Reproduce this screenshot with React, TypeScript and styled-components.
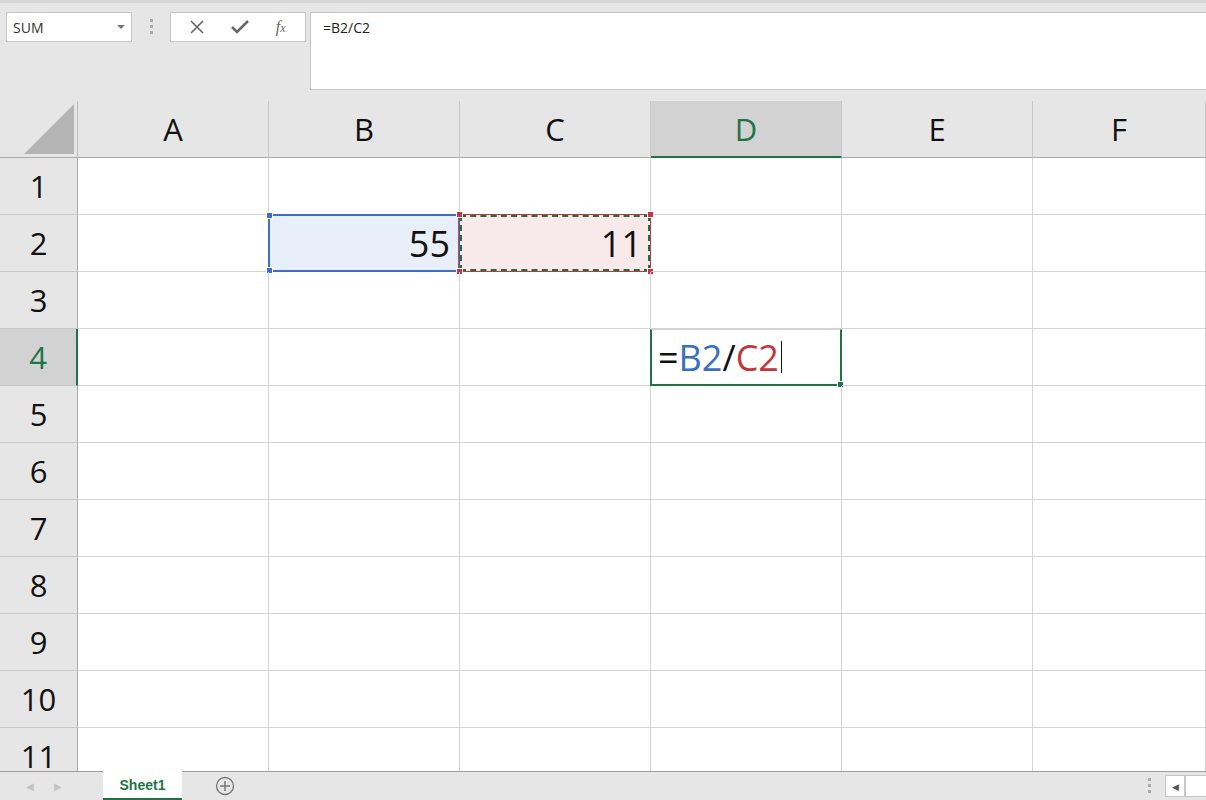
import React from "react";
import styled, { createGlobalStyle, css } from "styled-components";

const G = createGlobalStyle`
  html,body{margin:0;padding:0;background:#fff;}
  body{font-family:"Open Sans","Liberation Sans",sans-serif;}
`;
const Page = styled.div`width:1206px;height:800px;overflow:hidden;display:flex;flex-direction:column;background:#fff;`;
const Top = styled.div`height:101px;background:#e6e6e6;border-top:3px solid #d6d6d6;box-sizing:border-box;display:flex;align-items:flex-start;padding-top:9px;`;
const NameBox = styled.div`margin-left:6px;width:126px;height:30px;box-sizing:border-box;background:#fff;border:1px solid #c6c6c6;display:flex;align-items:center;justify-content:space-between;padding:0 6px;font-size:14px;color:#333;`;
const Dots = styled.div`width:38px;display:flex;justify-content:center;align-items:center;height:30px;`;
const Tools = styled.div`width:136px;height:30px;box-sizing:border-box;background:#fff;border:1px solid #c6c6c6;display:flex;align-items:center;justify-content:space-around;padding:0 6px;color:#666;`;
const Formula = styled.div`margin-left:4px;flex:1;height:78px;box-sizing:border-box;background:#fff;border:1px solid #c6c6c6;border-right:none;padding:5px 12px;font-size:14px;color:#222;`;
const Grid = styled.div`flex:1;display:grid;grid-template-columns:78px repeat(5,191px) 1fr;grid-auto-rows:57px;overflow:hidden;`;
const Corner = styled.div`background:#e6e6e6;border-right:1px solid #bdbdbd;border-bottom:1px solid #ababab;display:flex;align-items:flex-end;justify-content:flex-end;padding:0 3px 3px 0;`;
const ColH = styled.div<{ $sel?: boolean }>`background:${p => p.$sel ? "#d2d2d2" : "#e6e6e6"};border-right:1px solid #c8c8c8;border-bottom:${p => p.$sel ? "2px solid #217346" : "1px solid #ababab"};display:flex;align-items:center;justify-content:center;font-size:31px;color:${p => p.$sel ? "#217346" : "#111"};box-sizing:border-box;`;
const RowH = styled.div<{ $sel?: boolean }>`background:${p => p.$sel ? "#d2d2d2" : "#e6e6e6"};border-bottom:1px solid #c8c8c8;border-right:${p => p.$sel ? "2px solid #217346" : "1px solid #ababab"};display:flex;align-items:center;justify-content:center;font-size:31px;color:${p => p.$sel ? "#217346" : "#111"};box-sizing:border-box;`;
const Cell = styled.div<{ $kind?: "blue" | "red" | "active" }>`position:relative;border-right:1px solid #d4d4d4;border-bottom:1px solid #d4d4d4;box-sizing:border-box;display:flex;align-items:center;justify-content:flex-end;padding-right:8px;font-size:36px;color:#111;font-family:"Open Sans","Liberation Sans",sans-serif;
 ${p => p.$kind === "blue" && css`background:#e8eff9;border:2px solid #3a6fc4;margin:-1px 0 0 -1px;`}
 ${p => p.$kind === "red" && css`background:#f8eaea;border:1px solid #c4353e;margin:-1px 0 0 -1px;outline:2px dashed #1f6f3d;outline-offset:-3px;`}
 ${p => p.$kind === "active" && css`border:2px solid #217346;border-top:1px solid #d4d4d4;margin:0 0 0 -1px;justify-content:flex-start;padding-left:6px;`}
`;
const Handle = styled.span<{ $c: string; $x: "l" | "r"; $y: "t" | "b" }>`position:absolute;width:5px;height:5px;background:${p => p.$c};border:1px solid #fff;${p => p.$x === "l" ? "left:-4px" : "right:-4px"};${p => p.$y === "t" ? "top:-4px" : "bottom:-4px"};`;
const Caret = styled.span`display:inline-block;width:1px;height:32px;background:#111;margin-left:2px;`;
const Tabs = styled.div`height:28px;background:#e6e6e6;border-top:1px solid #9e9e9e;display:flex;align-items:stretch;font-size:14px;`;
const Nav = styled.div`width:103px;display:flex;align-items:center;gap:20px;padding-left:26px;box-sizing:border-box;color:#c3c3c3;font-size:10px;`;
const Tab = styled.div`width:79px;background:#fff;margin-top:-1px;border-bottom:2px solid #217346;display:flex;align-items:center;justify-content:center;font-weight:700;color:#217346;font-family:"Liberation Sans",sans-serif;`;
const Plus = styled.div`width:30px;margin-left:28px;display:flex;align-items:center;justify-content:center;`;
const Spacer = styled.div`flex:1;`;
const HScroll = styled.div`display:flex;align-items:center;gap:14px;`;
const SBox = styled.div`width:18px;height:20px;background:#fff;border:1px solid #c6c6c6;display:flex;align-items:center;justify-content:center;font-size:9px;color:#555;`;
const SRest = styled.div`width:20px;height:20px;background:#fff;border:1px solid #c6c6c6;border-right:none;margin-left:-14px;`;

const cols = ["A", "B", "C", "D", "E", "F"];
export default function App() {
  const rows = Array.from({ length: 11 }, (_, i) => i + 1);
  return (
    <Page>
      <G />
      <Top>
        <NameBox>SUM<svg width="8" height="5"><path d="M0 0h8L4 4z" fill="#777" /></svg></NameBox>
        <Dots><svg width="3" height="16"><rect y="0" width="3" height="3" fill="#aaa" /><rect y="6" width="3" height="3" fill="#aaa" /><rect y="12" width="3" height="3" fill="#aaa" /></svg></Dots>
        <Tools>
          <svg width="14" height="14"><path d="M1 1l12 12M13 1L1 13" stroke="#666" strokeWidth="1.6" /></svg>
          <svg width="18" height="14"><path d="M1 7l5 5L17 1" stroke="#666" strokeWidth="2.6" fill="none" /></svg>
          <span style={{ fontFamily: "Liberation Serif,serif", fontStyle: "italic", fontSize: 16 }}>f<span style={{ fontSize: 12 }}>x</span></span>
        </Tools>
        <Formula>=B2/C2</Formula>
      </Top>
      <Grid>
        <Corner><svg width="50" height="50"><path d="M50 0V50H0z" fill="#b4b4b4" /></svg></Corner>
        {cols.map(c => <ColH key={c} $sel={c === "D"}>{c}</ColH>)}
        {rows.map(r => (
          <React.Fragment key={r}>
            <RowH $sel={r === 4}>{r}</RowH>
            {cols.map(c => {
              if (r === 2 && c === "B") return <Cell key={c} $kind="blue">55<Handle $c="#3a6fc4" $x="l" $y="t" /><Handle $c="#3a6fc4" $x="l" $y="b" /></Cell>;
              if (r === 2 && c === "C") return <Cell key={c} $kind="red">11<Handle $c="#c4353e" $x="l" $y="t" /><Handle $c="#c4353e" $x="l" $y="b" /><Handle $c="#c4353e" $x="r" $y="t" /><Handle $c="#c4353e" $x="r" $y="b" /></Cell>;
              if (r === 4 && c === "D") return <Cell key={c} $kind="active">=<span style={{ color: "#3a6fc4" }}>B2</span>/<span style={{ color: "#c4353e" }}>C2</span><Caret /><Handle $c="#217346" $x="r" $y="b" /></Cell>;
              return <Cell key={c} />;
            })}
          </React.Fragment>
        ))}
      </Grid>
      <Tabs>
        <Nav><span>◀</span><span>▶</span></Nav>
        <Tab>Sheet1</Tab>
        <Plus><svg width="20" height="20"><circle cx="10" cy="10" r="8.5" stroke="#777" strokeWidth="1.3" fill="none" /><path d="M10 5v10M5 10h10" stroke="#777" strokeWidth="1.5" /></svg></Plus>
        <Spacer />
        <HScroll>
          <svg width="3" height="16"><rect width="3" height="3" fill="#aaa" /><rect y="6" width="3" height="3" fill="#aaa" /><rect y="12" width="3" height="3" fill="#aaa" /></svg>
          <SBox>◀</SBox><SRest />
        </HScroll>
      </Tabs>
    </Page>
  );
}
